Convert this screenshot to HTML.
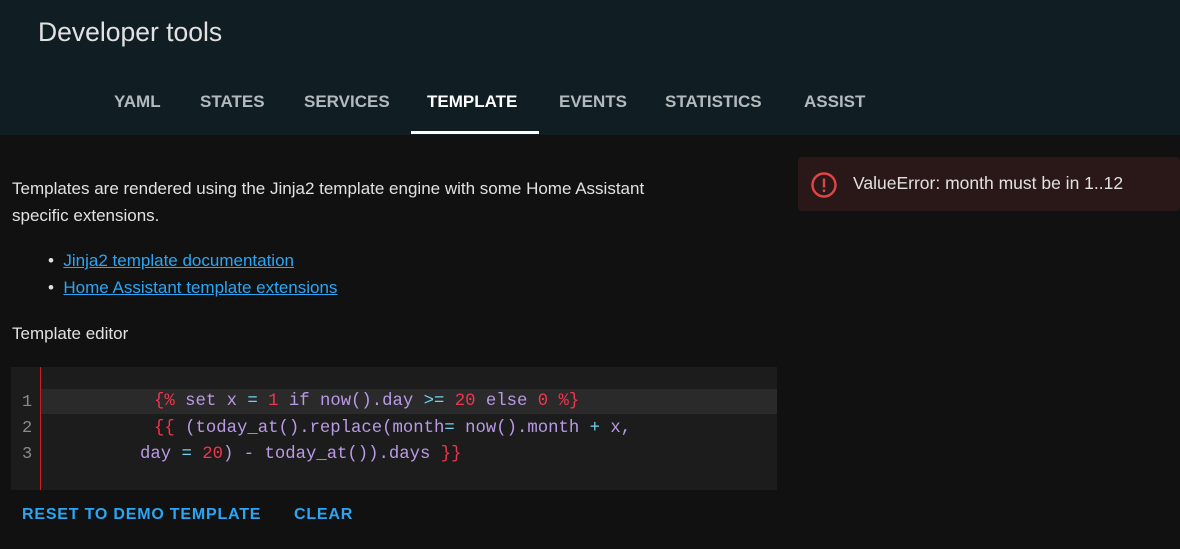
<!DOCTYPE html>
<html><head><style>
body{margin:0;width:1180px;height:549px;background:#111111;font-family:"Liberation Sans",sans-serif;color:#e1e1e1;overflow:hidden;position:relative}
.hdr{position:absolute;left:0;top:0;width:1180px;height:135px;background:#101e23}
.title{position:absolute;left:38px;top:17px;font-size:26.5px;color:#e1e1e1}
.tab{position:absolute;top:92px;font-size:17px;font-weight:bold;color:#b3babd}
.tab.a{color:#fff}
.ul{position:absolute;left:411px;top:131px;width:128px;height:3px;background:#fff}
.p{position:absolute;left:12px;font-size:17px;color:#e1e1e1}
a{color:#2aa6f5;text-decoration:underline}
.ed{position:absolute;left:11px;top:367px;width:766px;height:123px;background:#1c1c1c}
.gl{position:absolute;left:29px;top:0;width:1px;height:123px;background:#d01c1c}
.al{position:absolute;left:30px;top:22px;width:736px;height:25px;background:#2a2a2a}
.code{position:absolute;left:0;font-family:"Liberation Mono",monospace;font-size:17.3px;white-space:pre;line-height:26.5px}
.n{position:absolute;left:11px;color:#8a8a8a;font-family:'Liberation Mono',monospace;font-size:17px}
.r{color:#f0364f}.v{color:#b99ae6}.c{color:#6fd3f0}
.btn{position:absolute;top:506px;font-size:16px;font-weight:bold;color:#2aa6f5;letter-spacing:0.8px}
.err{position:absolute;left:798px;top:157px;width:382px;height:54px;background:#2a1818;border-radius:4px}
</style></head><body>
<div class="hdr">
<div class="title">Developer tools</div>
<div class="tab" style="left:114px">YAML</div>
<div class="tab" style="left:200px">STATES</div>
<div class="tab" style="left:304px">SERVICES</div>
<div class="tab a" style="left:427px">TEMPLATE</div>
<div class="tab" style="left:559px">EVENTS</div>
<div class="tab" style="left:665px">STATISTICS</div>
<div class="tab" style="left:804px">ASSIST</div>
<div class="ul"></div>
</div>
<div class="p" style="top:175px;line-height:27px;width:650px">Templates are rendered using the Jinja2 template engine with some Home Assistant specific extensions.</div>
<div class="p" style="top:251px;left:48px">•&nbsp;&nbsp;<a>Jinja2 template documentation</a></div>
<div class="p" style="top:278px;left:48px">•&nbsp;&nbsp;<a>Home Assistant template extensions</a></div>
<div class="p" style="top:324px">Template editor</div>
<div class="ed"><div class="al"></div><div class="gl"></div>
<div class="n" style="top:26px">1</div>
<div class="n" style="top:52px">2</div>
<div class="n" style="top:78px">3</div>
<div class="code" style="left:143px;top:22px"><span class="r">{%</span><span class="v"> set x </span><span class="c">=</span> <span class="r">1</span><span class="v"> if now().day </span><span class="c">&gt;=</span> <span class="r">20</span><span class="v"> else </span><span class="r">0 %}</span>
<span class="r">{{</span><span class="v"> (today_at().replace(month</span><span class="c">=</span><span class="v"> now().month </span><span class="c">+</span><span class="v"> x,</span></div>
<div class="code" style="left:129px;top:75px"><span class="v">day </span><span class="c">=</span> <span class="r">20</span><span class="v">) - today_at()).days </span><span class="r">}}</span></div>
</div>
<div class="btn" style="left:22px">RESET TO DEMO TEMPLATE</div>
<div class="btn" style="left:294px">CLEAR</div>
<div class="err">
<svg style="position:absolute;left:12px;top:14px" width="28" height="28" viewBox="0 0 28 28"><circle cx="14" cy="14" r="11.5" fill="none" stroke="#e04545" stroke-width="2.4"/><rect x="12.8" y="7.5" width="2.4" height="9" fill="#e04545"/><rect x="12.8" y="18.5" width="2.4" height="2.5" fill="#e04545"/></svg>
<div style="position:absolute;left:55px;top:16px;font-size:17.5px;color:#e1e1e1">ValueError: month must be in 1..12</div>
</div>
</body></html>
